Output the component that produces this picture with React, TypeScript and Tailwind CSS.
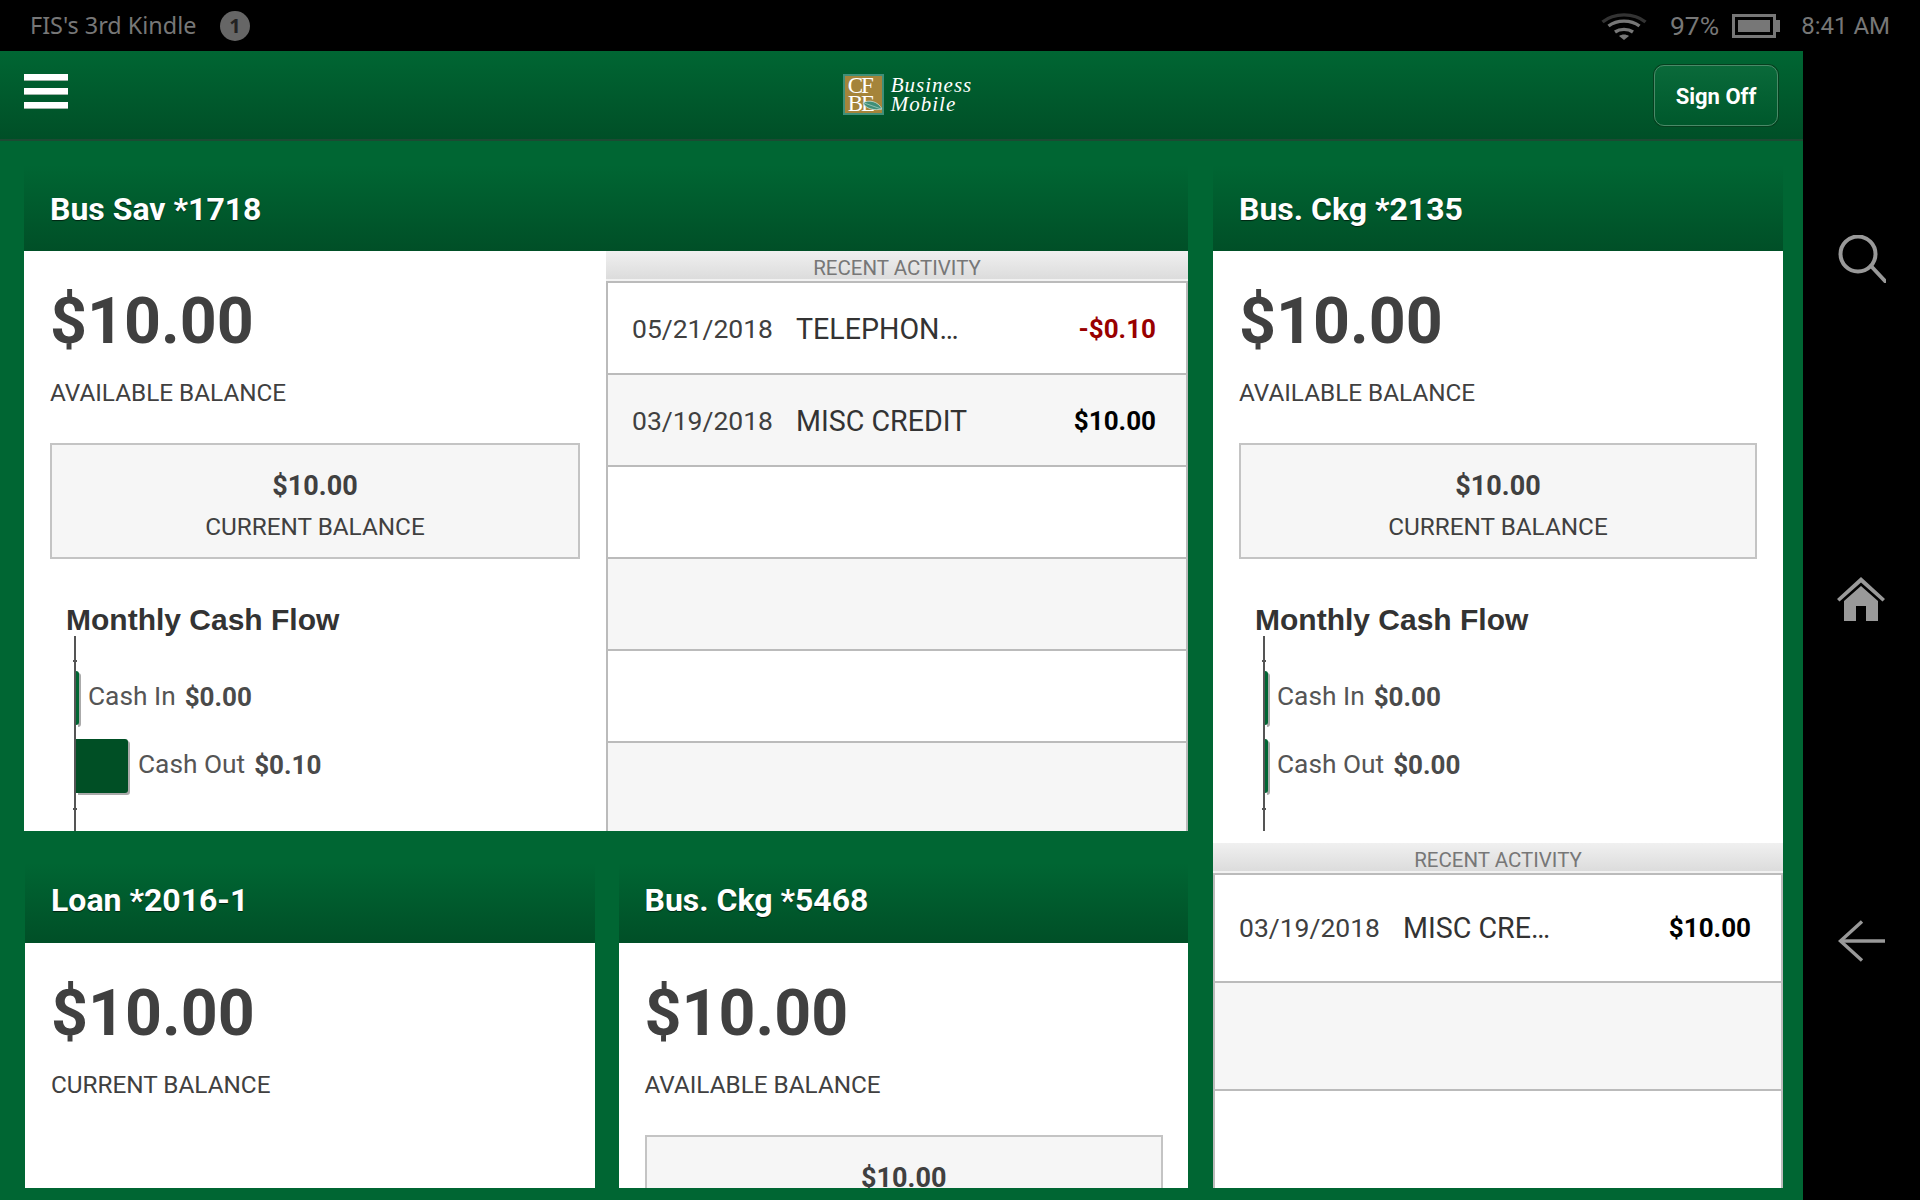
const roboto = "font-['Roboto',sans-serif]";

function Hamburger() {
  return (
    <div className="flex flex-col gap-[8px] w-[44px]">
      <div className="h-[6px] bg-white shadow-[0_1px_0_#9fb5a8]" />
      <div className="h-[6px] bg-white shadow-[0_1px_0_#9fb5a8]" />
      <div className="h-[6px] bg-white shadow-[0_1px_0_#9fb5a8]" />
    </div>
  );
}

function Logo() {
  return (
    <div className="flex items-center gap-[7px]">
      <div className="w-[41px] h-[41px] bg-[#a5843a] border-[2px] border-[#3f8f78] relative overflow-hidden font-['Liberation_Serif',serif] text-white text-[23px] leading-[18px] tracking-[-2px] pl-[3px] pt-[1px]">
        <div>CF</div>
        <div>BE</div>
        <svg viewBox="0 0 24 12" className="absolute left-[17px] top-[24px] w-[21px] h-[11px]">
          <path d="M1 3 C8 -1 18 1 23 10 C14 12 5 10 1 3 Z" fill="#3f8f78" stroke="#d5e8df" strokeWidth="0.8" />
          <path d="M2 3 L22 10" stroke="#d5e8df" strokeWidth="0.6" />
        </svg>
      </div>
      <div className="font-['Liberation_Serif',serif] italic text-white text-[21px] leading-[19px] tracking-[1px]">
        <div>Business</div>
        <div>Mobile</div>
      </div>
    </div>
  );
}

function WifiIcon() {
  return (
    <svg width="46" height="28" viewBox="0 0 46 28" fill="none" stroke="#777" strokeWidth="3.4">
      <path d="M1.5 10 C13 0.5 33 0.5 44.5 10" stroke="#333" />
      <path d="M7.5 14 C16 7.5 30 7.5 38.5 14" />
      <path d="M14 20 C19 16.5 27 16.5 32 20" />
      <path d="M23 28 L18 24 C21 22 25 22 28 24 Z" fill="#777" stroke="none" />
    </svg>
  );
}

function BatteryIcon() {
  return (
    <div className="flex items-center">
      <div className="w-[44px] h-[24px] border-[3px] border-[#777] p-[3px]">
        <div className="w-full h-full bg-[#777]" />
      </div>
      <div className="w-[4px] h-[12px] bg-[#777]" />
    </div>
  );
}

function StatusBar() {
  return (
    <div className="h-[51px] bg-black flex items-center pl-[30px] pr-[30px] text-[#777] shrink-0 font-['Noto_Sans',sans-serif]">
      <span className="text-[23.4px] leading-none w-[190px]">FIS's 3rd Kindle</span>
      <span className="w-[30px] h-[30px] rounded-full bg-[#666] text-[#222] flex items-center justify-center text-[20px] font-bold">1</span>
      <div className={`ml-auto flex items-center ${roboto}`}>
        <WifiIcon />
        <span className="ml-[23px] text-[26.5px] font-normal">97%</span>
        <span className="ml-[13px]"><BatteryIcon /></span>
        <span className="ml-[21px] text-[24px] font-normal">8:41 AM</span>
      </div>
    </div>
  );
}

function Header() {
  return (
    <div className="h-[90px] shrink-0 flex items-center justify-between pl-[24px] pr-[25px] bg-gradient-to-b from-[#006633] to-[#004f27] border-b-[2px] border-[#1d4a33]">
      <div className="-mt-[8px]"><Hamburger /></div>
      <div className="ml-[93px] -mt-[1px]"><Logo /></div>
      <button className={`w-[124px] h-[61px] rounded-[10px] border border-[#4a8a68] shadow-[0_0_0_1px_#06401f] bg-gradient-to-b from-[#0a6a3a] to-[#00582c] text-white text-[22px] font-bold pt-[2px] ${roboto}`}>
        Sign Off
      </button>
    </div>
  );
}

function CardTitle({ title, tall }: { title: string; tall?: boolean }) {
  return (
    <div className={`${tall ? "h-[86px]" : "h-[80px]"} pl-[26px] shrink-0 bg-gradient-to-b from-[#006633] to-[#004f27] flex items-center text-white text-[32px] font-bold [text-shadow:0_1px_1px_rgba(0,0,0,.6)] ${roboto}`}>
      <span className={tall ? "mt-[1px]" : "-mt-[6px]"}>{title}</span>
    </div>
  );
}

function Amount({ label }: { label: string }) {
  return (
    <div className={`${roboto} text-[#404040]`}>
      <div className="pt-[32px] h-[108px] text-[64.5px] leading-[76px] font-bold">$10.00</div>
      <div className="mt-[19px] text-[24.3px] leading-[30px] font-normal">{label}</div>
    </div>
  );
}

function BalanceBox({ clipped }: { clipped?: boolean }) {
  return (
    <div className={`${roboto} mt-[35px] h-[116px] border-[2px] border-[#c4c4c4] bg-[#f6f6f6] text-[#404040] text-center pt-[23px] shrink-0`}>
      <div className="text-[27px] leading-[36px] font-bold">$10.00</div>
      {!clipped && <div className="mt-[5px] text-[24.3px] leading-[36px] font-normal">CURRENT BALANCE</div>}
    </div>
  );
}

function Bar({ wide, label, value }: { wide?: boolean; label: string; value: string }) {
  return (
    <div className="flex items-center h-[54px]">
      <div className={`h-[54px] rounded-r-[3px] shadow-[2px_2px_0_#aaa] ${wide ? "w-[52px] bg-[#004f25]" : "w-[3px] bg-[#006633]"}`} />
      <div className={`${wide ? "ml-[10px]" : "ml-[9px]"} -mt-[3px] text-[26.3px] leading-none text-[#555] font-normal`}>{label}</div>
      <div className="ml-[9px] -mt-[3px] text-[26px] leading-none text-[#4a4a4a] font-bold">{value}</div>
    </div>
  );
}

function CashFlow({ out }: { out: string }) {
  const wide = out === "$0.10";
  return (
    <div className={roboto}>
      <div className="mt-[45px] ml-[16px] h-[32px] text-[30px] leading-[32px] font-bold text-[#333] font-['Liberation_Sans',sans-serif]">Monthly Cash Flow</div>
      <div className="ml-[24px] h-[195px] border-l-[2px] border-[#555] pt-[35px] flex flex-col gap-[14px] relative">
        <div className="absolute -left-[3px] top-[24px] w-[4px] h-[2px] bg-[#555]" />
        <div className="absolute -left-[3px] top-[172px] w-[4px] h-[2px] bg-[#555]" />
        <Bar label="Cash In" value="$0.00" />
        <Bar wide={wide} label="Cash Out" value={out} />
      </div>
    </div>
  );
}

type Row = { date: string; desc: string; amount: string; red?: boolean };

function Recent({ rows, rowClass, count, headClass }: { rows: Row[]; rowClass: string; count: number; headClass: string }) {
  const items = Array.from({ length: count }, (_, i) => rows[i]);
  return (
    <div className={`${roboto} flex flex-col`}>
      <div className={`${headClass} shrink-0 bg-gradient-to-b from-[#f0f0f0] to-[#dcdcdc] text-center text-[#777] text-[20.5px] font-normal`}>RECENT ACTIVITY</div>
      <div className="h-[2px] bg-[#f2f2f2] shrink-0" />
      <div className="border-x-[2px] border-[#bbb]">
        {items.map((r, i) => (
          <div key={i} className={`${rowClass} border-t-[2px] border-[#bbb] flex items-center pr-[30px] ${i % 2 ? "bg-[#f6f6f6]" : "bg-white"}`}>
            {r && (
              <>
                <span className="w-[164px] shrink-0 text-[26.5px] font-normal text-[#404040]">{r.date}</span>
                <span className="text-[28.6px] font-normal text-[#333]">{r.desc}</span>
                <span className={`ml-auto text-[26px] font-bold ${r.red ? "text-[#990000]" : "text-black"}`}>{r.amount}</span>
              </>
            )}
          </div>
        ))}
      </div>
    </div>
  );
}

function SideIcons() {
  return (
    <div className="w-[117px] shrink-0 bg-black relative">
      <svg className="absolute left-[35px] top-[184px]" width="48" height="48" viewBox="0 0 48 48" fill="none" stroke="#999" strokeWidth="4">
        <circle cx="20" cy="19" r="17.5" />
        <path d="M33 31 L47 46" strokeLinecap="round" />
      </svg>
      <svg className="absolute left-[34px] top-[526px]" width="48" height="44" viewBox="0 0 48 44" fill="#999">
        <path d="M24 0 L48 22 L45.5 24.5 L24 5.5 L2.5 24.5 L0 22 Z" />
        <path d="M24 9 L41 24 L41 44 L29 44 L29 29 L19 29 L19 44 L7 44 L7 24 Z" />
      </svg>
      <svg className="absolute left-[35px] top-[869px]" width="47" height="42" viewBox="0 0 47 42" fill="none" stroke="#999" strokeWidth="3.4">
        <path d="M47 21 L2 21" />
        <path d="M24 1.5 L2.5 21 L24 40.5" />
      </svg>
    </div>
  );
}

export default function App() {
  return (
    <div className="w-[1920px] h-[1200px] overflow-hidden bg-black flex flex-col">
      <StatusBar />
      <div className="flex flex-1 min-h-0">
        <div className="w-[1803px] shrink-0 flex flex-col bg-[#006633]">
          <Header />
          <div className="flex-1 min-h-0 flex gap-[25px] pl-[24px] pt-[24px] pb-[12px]">
            <div className="w-[1164px] flex flex-col gap-[32px] shrink-0">
              <div className="flex flex-col shrink-0">
                <CardTitle title="Bus Sav *1718" tall />
                <div className="flex h-[580px] bg-white overflow-hidden">
                  <div className="w-[582px] shrink-0 pl-[26px] pr-[26px] flex flex-col">
                    <Amount label="AVAILABLE BALANCE" />
                    <BalanceBox />
                    <CashFlow out="$0.10" />
                  </div>
                  <div className="w-[582px] shrink-0">
                    <Recent
                      headClass="h-[28px] leading-[34px]"
                      rowClass="h-[92px] pl-[24px] pt-[2px]"
                      count={6}
                      rows={[
                        { date: "05/21/2018", desc: "TELEPHON…", amount: "-$0.10", red: true },
                        { date: "03/19/2018", desc: "MISC CREDIT", amount: "$10.00" },
                      ]}
                    />
                  </div>
                </div>
              </div>
              <div className="flex gap-[24px] flex-1 min-h-0 ml-[1px]">
                <div className="w-[570px] flex flex-col min-h-0">
                  <CardTitle title="Loan *2016-1" />
                  <div className="flex-1 bg-white pl-[26px] overflow-hidden min-h-0">
                    <Amount label="CURRENT BALANCE" />
                  </div>
                </div>
                <div className="w-[570px] flex flex-col min-h-0">
                  <CardTitle title="Bus. Ckg *5468" />
                  <div className="flex-1 bg-white pl-[26px] pr-[25px] overflow-hidden min-h-0">
                    <Amount label="AVAILABLE BALANCE" />
                    <BalanceBox clipped />
                  </div>
                </div>
              </div>
            </div>
            <div className="w-[570px] flex flex-col shrink-0 min-h-0">
              <CardTitle title="Bus. Ckg *2135" tall />
              <div className="flex-1 bg-white overflow-hidden min-h-0">
                <div className="h-[580px] pl-[26px] pr-[26px] flex flex-col">
                  <Amount label="AVAILABLE BALANCE" />
                  <BalanceBox />
                  <CashFlow out="$0.00" />
                </div>
                <div className="mt-[12px]">
                  <Recent
                    headClass="h-[28px] leading-[34px]"
                    rowClass="h-[108px] pl-[24px]"
                    count={3}
                    rows={[{ date: "03/19/2018", desc: "MISC CRE…", amount: "$10.00" }]}
                  />
                </div>
              </div>
            </div>
          </div>
        </div>
        <SideIcons />
      </div>
    </div>
  );
}
